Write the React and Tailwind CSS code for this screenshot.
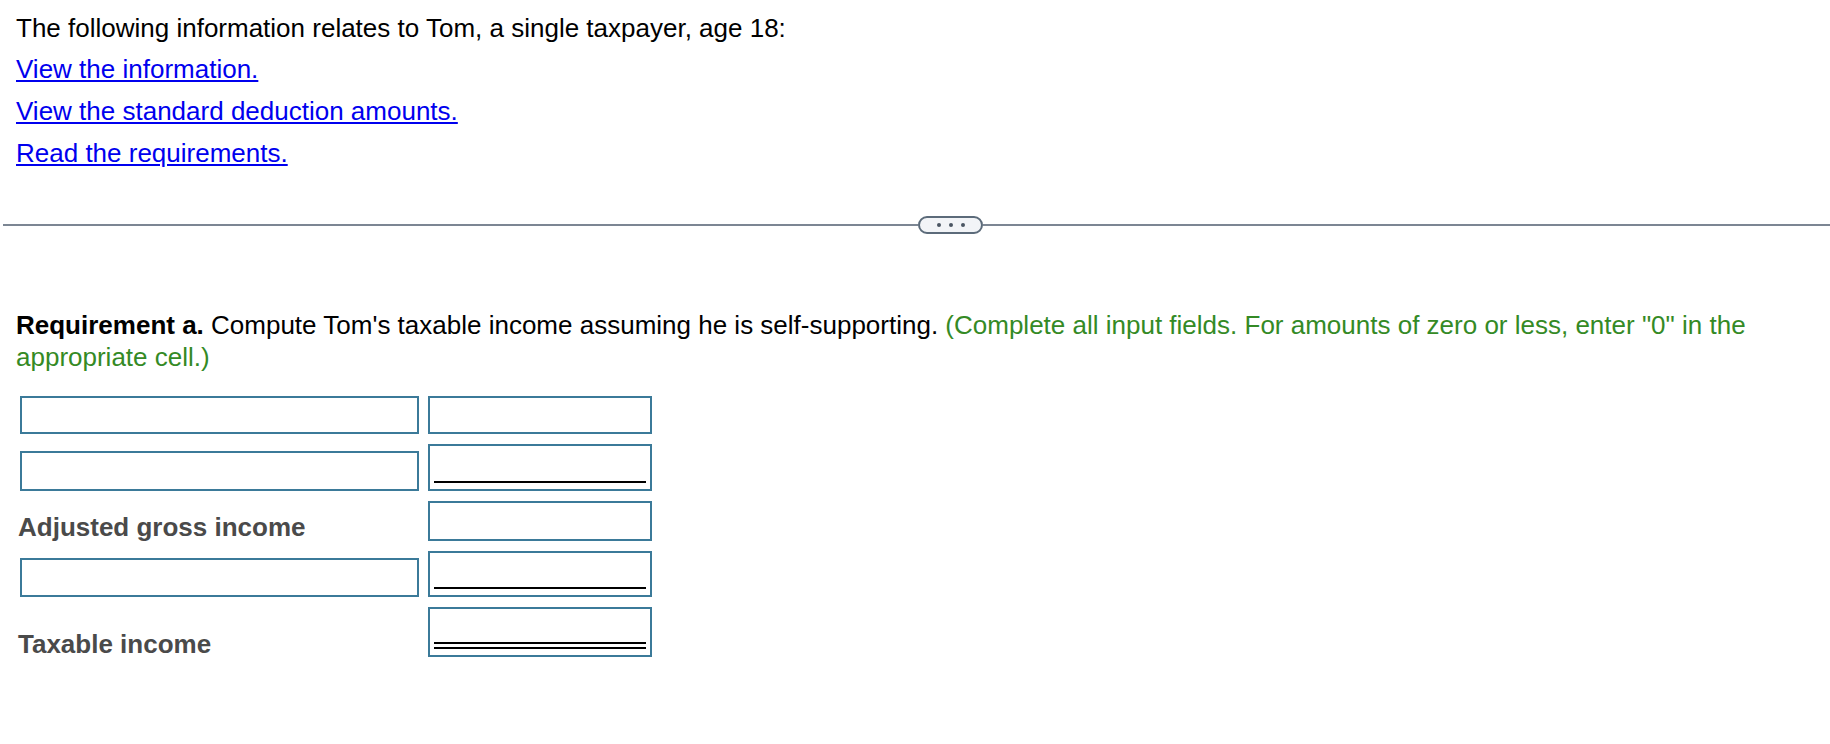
const font = { fontFamily: '"Liberation Sans", Arial, sans-serif' }

function Box({ className = '' }) {
  return <div className={`border-2 border-[#3b7a99] bg-white ${className}`} />
}

function AmountBox({ height, lines = 0 }) {
  return (
    <div className={`w-[224px] ${height} border-2 border-[#3b7a99] bg-white flex flex-col justify-end px-[4px] pb-[6px] gap-[3px]`}>
      {lines >= 1 && <div className="h-[2px] bg-black" />}
      {lines >= 2 && <div className="h-[2px] bg-black" />}
    </div>
  )
}

function Row({ left, right }) {
  return (
    <div className="flex items-end gap-[9px]">
      <div className="w-[401px] flex items-end">{left}</div>
      {right}
    </div>
  )
}

export default function App() {
  return (
    <div className="bg-white min-h-[744px] text-[26px] text-black" style={font}>
      <div className="px-4 pt-[7px] leading-[42px]">
        <p className="mb-[-1px]">The following information relates to Tom, a single taxpayer, age 18:</p>
        <p><a href="#" className="text-[#0000ee] underline">View the information.</a></p>
        <p><a href="#" className="text-[#0000ee] underline">View the standard deduction amounts.</a></p>
        <p><a href="#" className="text-[#0000ee] underline">Read the requirements.</a></p>
      </div>

      <div className="mt-[42px] flex items-center pl-[3px]">
        <div className="w-[915px] h-[2px] bg-[#7c8693]" />
        <div className="w-[65px] h-[18px] rounded-full border-2 border-[#5c6b7a] bg-[#f2f4f7] flex items-center justify-center gap-[8px]">
          <span className="w-[4px] h-[4px] rounded-full bg-[#4b5563]" />
          <span className="w-[4px] h-[4px] rounded-full bg-[#4b5563]" />
          <span className="w-[4px] h-[4px] rounded-full bg-[#4b5563]" />
        </div>
        <div className="flex-1 h-[2px] bg-[#7c8693]" />
      </div>

      <p className="mt-[75px] px-4 leading-[32px]">
        <span className="font-bold">Requirement a.</span> Compute Tom's taxable income assuming he is self-supporting.{' '}
        <span className="text-[#348a25]">(Complete all input fields. For amounts of zero or less, enter "0" in the appropriate cell.)</span>
      </p>

      <div className="mt-[23px] ml-[18px] flex flex-col gap-[10px] leading-[30px]">
        <Row left={<Box className="ml-[2px] w-[399px] h-[38px]" />} right={<AmountBox height="h-[38px]" />} />
        <Row left={<Box className="ml-[2px] w-[399px] h-[40px]" />} right={<AmountBox height="h-[47px]" lines={1} />} />
        <Row
          left={<span className="font-bold text-[#4a4a4a] mb-[-1px]">Adjusted gross income</span>}
          right={<AmountBox height="h-[40px]" />}
        />
        <Row left={<Box className="ml-[2px] w-[399px] h-[39px]" />} right={<AmountBox height="h-[46px]" lines={1} />} />
        <Row
          left={<span className="font-bold text-[#4a4a4a] mb-[-2px]">Taxable income</span>}
          right={<AmountBox height="h-[50px]" lines={2} />}
        />
      </div>
    </div>
  )
}
